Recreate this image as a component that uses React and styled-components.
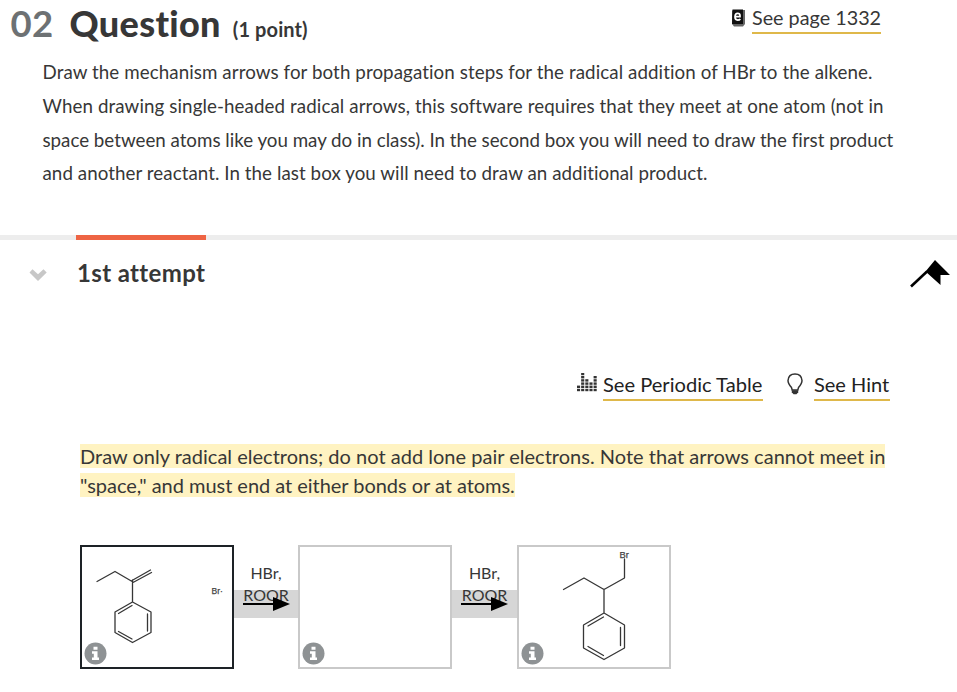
import React from "react";
import styled, { createGlobalStyle } from "styled-components";

const Global = createGlobalStyle`
  * { box-sizing: border-box; }
  body {
    margin: 0; background: #fff; color: #373737; font-family: Lato, sans-serif; overflow: hidden;
    font-variant-ligatures: none;
  }
  svg { display: block; flex: none; }
`;
const Page = styled.main`width: 957px; height: 692px; overflow: hidden;`;
const Header = styled.header`
  display: flex; justify-content: space-between; align-items: flex-start;
  height: 55px; padding: 0 76px 0 10.5px;
`;
const Title = styled.h1`
  display: flex; align-items: baseline; margin: 1px 0 0;
  font-size: 36px; line-height: 44px; font-weight: 900; white-space: nowrap; letter-spacing: 0.32px;
`;
const Number = styled.span`width: 59px; color: #6d7173; font-weight: 700; font-size: 36.5px;`;
const Points = styled.span`margin-left: 12px; font-size: 20px; font-weight: 700; letter-spacing: 0.1px;`;
const Link = styled.a`
  display: block; height: 28px; width: ${p => p.$w}px;
  border-bottom: 2px solid #dfb84a; color: ${p => p.$color || "#222"};
  font-size: ${p => p.$size || 20}px; line-height: 22px; white-space: nowrap;
`;
const PageLink = styled.div`display: flex; gap: 6px; padding-top: 6px; svg { margin-top: 3px; }`;
const Description = styled.p`
  margin: 0 0 0 42.5px; height: 180px; font-size: 18.75px; line-height: 33.75px; white-space: nowrap;
`;
const Line = styled.span`display: block; letter-spacing: ${p => p.$tracking}px;`;
const Rule = styled.div`height: 5px; background: #ededed; padding-left: 76px;`;
const ActiveTab = styled.div`width: 130px; height: 5px; background: #ee6444;`;
const AttemptBar = styled.section`
  display: flex; height: 130px; padding: 18px 7px 0 29px;
`;
const AttemptTitle = styled.h2`
  flex: 1; margin: 0 0 0 30px; font-size: 24px; line-height: 30px; font-weight: 700; letter-spacing: 0.36px;
`;
const Chevron = styled.svg`margin-top: 10px;`;
const Pin = styled.svg`margin-top: 0;`;
const Tools = styled.nav`
  display: flex; justify-content: flex-end; height: 72px; padding: 3px 67px 0 0;
`;
const Tool = styled.div`display: flex; gap: ${p => p.$gap}px; margin-left: 24px;`;
const Prompt = styled.p`
  margin: 0 0 0 80px; height: 103px; font-size: 20px; line-height: 29px; white-space: nowrap;
`;
const Mark = styled.mark`background: #fff3c2; color: inherit; letter-spacing: ${p => p.$tracking}px;`;
const Steps = styled.div`display: flex; margin-left: 80px; height: 124px;`;
const Box = styled.div`
  width: 154px; height: 124px; position: relative;
  border: 2px solid ${p => (p.$active ? "#1d2226" : "#c9c9c9")};
`;
const InfoBadge = styled.svg`position: absolute; left: 2px; bottom: 2.5px;`;
const Connector = styled.div`
  position: relative; width: ${p => p.$w}px; padding-top: 17px;
  background: linear-gradient(#d6d6d6, #d6d6d6) 0 45px / 100% 28px no-repeat;
  font-size: 16px; line-height: 22px; text-align: center;
`;
const Arrow = styled.svg`position: absolute; left: 9px; top: 51px;`;

const Info = () => (
  <InfoBadge width="23" height="23" viewBox="0 0 23 23">
    <circle cx="11.5" cy="11.5" r="11" fill="#8e9294" />
    <path d="M9.5 4.7h4v3h-4zM8 9.3h5.5v6.2H15V18H8v-2.5h1.8v-3.7H8z" fill="#fff" />
  </InfoBadge>
);
const Reagent = ({ width }) => (
  <Connector $w={width}>
    HBr,<br />ROOR
    <Arrow width="48" height="16" viewBox="0 0 48 16">
      <path d="M0 8h32" stroke="#000" strokeWidth="2" />
      <path d="M30 1v14l17-7z" />
    </Arrow>
  </Connector>
);
const Molecule = styled.svg`
  fill: none; stroke: #363636; stroke-width: 1.3; stroke-linecap: round; stroke-linejoin: round;
  text {
    fill: #444; stroke: #444; stroke-width: 0.25;
    font-family: "Liberation Sans", sans-serif; font-size: ${p => p.$label}px;
  }
`;
const COLUMNS = [2, 6, 4, 3, 5];

export default function App() {
  return (
    <Page>
      <Global />
      <Header>
        <Title><Number>02</Number>Question<Points>(1 point)</Points></Title>
        <PageLink>
          <svg width="15" height="18" viewBox="0 0 15 18">
            <path d="M2 1h12v14l-2 2.500H3L1 15V2z" fill="#666" />
            <path d="M1.500 0.500h10.500v14.500H1z" fill="#111" />
            <path d="M4 7.700h5V6.500Q9 4.300 6.600 4.300T4 7.500t2.700 3.700Q8.500 11.200 9.300 10" fill="none" stroke="#fff" strokeWidth="1.700" />
          </svg>
          <Link $w={129} $size={19.8} $color="#373737">See page 1332</Link>
        </PageLink>
      </Header>
      <Description>
        <Line $tracking={0.077}>Draw the mechanism arrows for both propagation steps for the radical addition of HBr to the alkene.</Line>
        <Line $tracking={0.09}>When drawing single-headed radical arrows, this software requires that they meet at one atom (not in</Line>
        <Line $tracking={-0.01}>space between atoms like you may do in class). In the second box you will need to draw the first product</Line>
        <Line $tracking={0.055}>and another reactant. In the last box you will need to draw an additional product.</Line>
      </Description>
      <Rule><ActiveTab /></Rule>
      <AttemptBar>
        <Chevron width="18" height="14" viewBox="0 0 18 14">
          <path d="M0.500 4.500L3.500 1.300 9 6.300 14.500 1.300 17.700 4.500 9 13z" fill="#c7c7c7" />
        </Chevron>
        <AttemptTitle>1st attempt</AttemptTitle>
        <Pin width="41" height="32" viewBox="0 0 41 32">
          <path d="M2 28.500L18 13.500" stroke="#000" strokeWidth="2.600" />
          <path d="M26 2l15 15h-9.500v10L16.500 13.500z" />
        </Pin>
      </AttemptBar>
      <Tools>
        <Tool $gap={6}>
          <svg width="20" height="20" viewBox="0 0 20 20" fill="#333">
            {COLUMNS.map((n, c) => Array.from({ length: n }, (_, r) => (
              <rect key={`${c}-${r}`} x={c * 4.15} y={15.8 - r * 3.2} width="3.100" height="2.400" />
            )))}
          </svg>
          <Link $w={160} $size={20.1}>See Periodic Table</Link>
        </Tool>
        <Tool $gap={11}>
          <svg width="16" height="22" viewBox="0 0 16 22" fill="none" stroke="#333" strokeWidth="1.500">
            <path d="M5.200 17L4.500 14.500Q1 10.500 1 7.500Q1.500 1 8 1t7 6.500q0 3-3.500 7L10.800 17z" />
            <path d="M4.800 17.200h6.400v2l-1.700 2h-3l-1.700-2z" fill="#333" stroke="none" />
          </svg>
          <Link $w={76}>See Hint</Link>
        </Tool>
      </Tools>
      <Prompt>
        <Mark $tracking={0.015}>Draw only radical electrons; do not add lone pair electrons. Note that arrows cannot meet in</Mark><br />
        <Mark $tracking={-0.035}>"space," and must end at either bonds or at atoms.</Mark>
      </Prompt>
      <Steps>
        <Box $active>
          <Molecule $label={8.5} width="150" height="120" viewBox="82 547 150 120">
            <path d="M97 581.500L115 571.500L133 582M132 580.500L150.500 570M133 582.500L151.500 572.500M132.500 580V602L151 612V632.500L132.500 642.500L115 632.500V612L132.500 602M132 605.500L118.500 613.500M147.500 614V631M132 639L118.500 631.500" />
            <text x="211.500" y="594">Br·</text>
          </Molecule>
          <Info />
        </Box>
        <Reagent width={64} />
        <Box><Info /></Box>
        <Reagent width={65} />
        <Box>
          <Molecule $label={9.3} width="150" height="120" viewBox="519 547 150 120">
            <path d="M563.500 589.500L584 578L604 589.500L624.500 578V559M604 589.500V613L624.500 625V648L604 659.500L583.500 648V625L604 613M603.500 617L588 626M620.500 627.500V645.500M603.500 655.500L588 646.500" />
            <text x="619.500" y="558">Br</text>
          </Molecule>
          <Info />
        </Box>
      </Steps>
    </Page>
  );
}
